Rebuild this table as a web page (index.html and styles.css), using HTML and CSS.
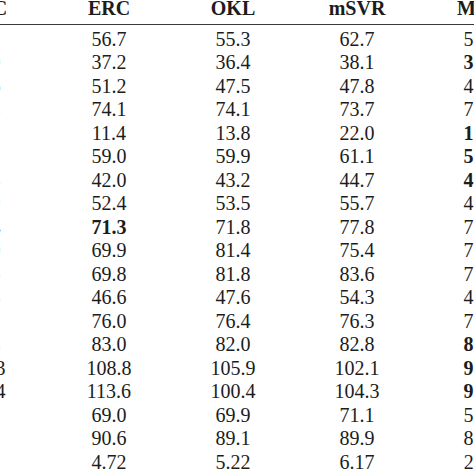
FILE: index.html
```html
<!DOCTYPE html>
<html lang="en">
<head>
  <meta charset="UTF-8" />
  <title>Results</title>
  <link rel="stylesheet" href="styles.css">
</head>
<body>
  <div class="table-wrap">
    <table class="results">
      <thead>
        <tr><th>KRC</th><th>ERC</th><th>OKL</th><th>mSVR</th><th>MKL</th></tr>
      </thead>
      <tbody>
        <tr><td>58.2</td><td>56.7</td><td>55.3</td><td>62.7</td><td>50.9</td></tr>
        <tr><td>39.0</td><td>37.2</td><td>36.4</td><td>38.1</td><td class="best">35.8</td></tr>
        <tr><td>49.6</td><td>51.2</td><td>47.5</td><td>47.8</td><td>46.2</td></tr>
        <tr><td>75.3</td><td>74.1</td><td>74.1</td><td>73.7</td><td>73.0</td></tr>
        <tr><td>16.1</td><td>11.4</td><td>13.8</td><td>22.0</td><td class="best">10.9</td></tr>
        <tr><td>60.2</td><td>59.0</td><td>59.9</td><td>61.1</td><td class="best">57.4</td></tr>
        <tr><td>45.3</td><td>42.0</td><td>43.2</td><td>44.7</td><td class="best">41.6</td></tr>
        <tr><td>54.9</td><td>52.4</td><td>53.5</td><td>55.7</td><td>49.5</td></tr>
        <tr><td>73.4</td><td class="best">71.3</td><td>71.8</td><td>77.8</td><td>72.3</td></tr>
        <tr><td>72.0</td><td>69.9</td><td>81.4</td><td>75.4</td><td>70.1</td></tr>
        <tr><td>71.5</td><td>69.8</td><td>81.8</td><td>83.6</td><td>72.6</td></tr>
        <tr><td>48.8</td><td>46.6</td><td>47.6</td><td>54.3</td><td>45.2</td></tr>
        <tr><td>77.1</td><td>76.0</td><td>76.4</td><td>76.3</td><td>75.8</td></tr>
        <tr><td>84.5</td><td>83.0</td><td>82.0</td><td>82.8</td><td class="best">81.7</td></tr>
        <tr><td>107.3</td><td>108.8</td><td>105.9</td><td>102.1</td><td class="best">98.6</td></tr>
        <tr><td>109.4</td><td>113.6</td><td>100.4</td><td>104.3</td><td class="best">97.2</td></tr>
        <tr><td>70.2</td><td>69.0</td><td>69.9</td><td>71.1</td><td>58.4</td></tr>
        <tr><td>90.1</td><td>90.6</td><td>89.1</td><td>89.9</td><td>85.0</td></tr>
        <tr><td>5.61</td><td>4.72</td><td>5.22</td><td>6.17</td><td>2.11</td></tr>
      </tbody>
    </table>
  </div>
</body>
</html>
```

FILE: styles.css
```css
html, body {
  margin: 0;
  overflow: hidden;
  background: #fff;
}

body {
  width: 474px;
  height: 474px;
  font-family: "Liberation Serif", "Times New Roman", serif;
  color: #1c1c1c;
}

/* the visible part is a crop of a wider table */
.table-wrap {
  width: 620px;
  margin-left: -77px;
  margin-top: -3.5px;
}

.results {
  width: 620px;
  border-collapse: collapse;
  table-layout: fixed;
  font-size: 20px;
  line-height: 23.5px;
}

.results th,
.results td {
  width: 124px;
  padding: 0;
  text-align: center;
  white-space: nowrap;
}

.results th {
  font-weight: bold;
  padding-bottom: 4px;
  border-bottom: 1px solid #3a3a3a;
}

.results tbody tr:first-child td {
  padding-top: 2.5px;
}

.results td:first-child {
  padding-right: 4px;
}

.results td.best {
  font-weight: bold;
}
```
